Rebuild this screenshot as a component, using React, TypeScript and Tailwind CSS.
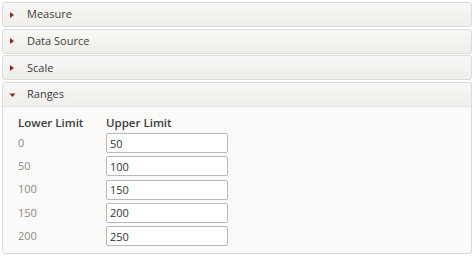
import React from "react";

const Tri = ({ open }: { open?: boolean }) =>
  open ? (
    <svg width="8" height="8" viewBox="0 0 8 8" className="shrink-0">
      <path d="M0.5 2.5 L6.5 2.5 L3.5 6 Z" fill="#8c2b25" />
    </svg>
  ) : (
    <svg width="8" height="8" viewBox="0 0 8 8" className="shrink-0">
      <path d="M1 1 L5 4 L1 7 Z" fill="#8c2b25" />
    </svg>
  );

const Header = ({ label, open }: { label: string; open?: boolean }) => (
  <div
    className={`flex items-center h-[25px] pl-[6px] gap-[10px] border border-[#dddbd6] bg-gradient-to-b from-[#f8f7f5] to-[#efeeea] text-[#3c3c3c] text-[11px] ${
      open ? "rounded-t-[3px] border-b-[#e6e4df]" : "rounded-[3px]"
    }`}
  >
    <Tri open={open} />
    <span>{label}</span>
  </div>
);

export default function App() {
  const rows = [
    ["0", "50"],
    ["50", "100"],
    ["100", "150"],
    ["150", "200"],
    ["200", "250"],
  ];
  return (
    <div
      className="w-[474px] h-[258px] bg-white px-[2px] pt-[2px] flex flex-col gap-[1.7px]"
      style={{ fontFamily: '"Open Sans", "Noto Sans", sans-serif' }}
    >
      <Header label="Measure" />
      <Header label="Data Source" />
      <Header label="Scale" />
      <div className="flex flex-col">
        <Header label="Ranges" open />
        <div className="border border-t-0 border-[#dddbd6] rounded-b-[3px] bg-[#fbfaf8] pl-[15px] pt-[6px] h-[147px]">
          <div className="grid grid-cols-[88px_123px] text-[11.5px] font-semibold text-[#3c3c3c] h-[20px] items-center">
            <span>Lower Limit</span>
            <span>Upper Limit</span>
          </div>
          <div className="flex flex-col gap-[3.3px]">
            {rows.map(([lo, hi]) => (
              <div key={lo} className="grid grid-cols-[88px_123px] items-center h-[20px]">
                <span className="text-[11px] text-[#8a8a8a]">{lo}</span>
                <input
                  defaultValue={hi}
                  className="h-[20px] w-[122px] border border-[#b9b9b9] rounded-[2px] bg-white px-[3px] text-[11px] text-[#333333] outline-none"
                  style={{ fontFamily: '"Open Sans", "Noto Sans", sans-serif' }}
                />
              </div>
            ))}
          </div>
        </div>
      </div>
    </div>
  );
}
